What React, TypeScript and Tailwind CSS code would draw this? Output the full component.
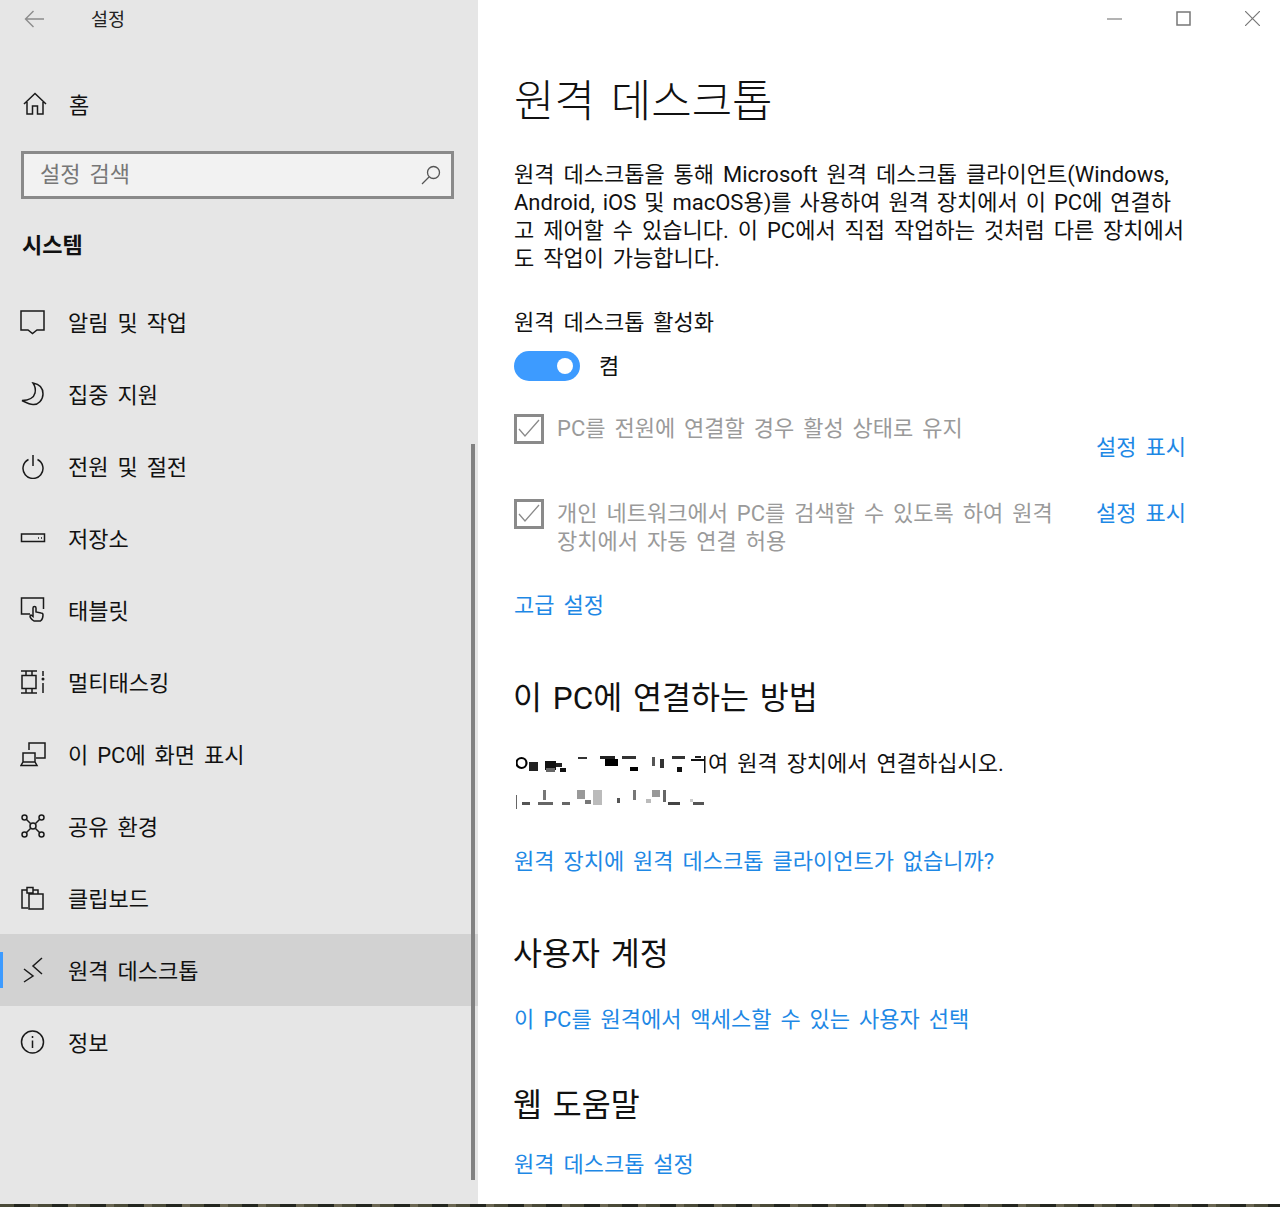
import type { ReactNode } from 'react'

const FONT = "font-['Roboto','Noto_Sans_CJK_KR',sans-serif]"

function Svg({ children, className = '' }: { children: ReactNode; className?: string }) {
  return (
    <svg width="26" height="26" viewBox="0 0 26 26" fill="none" stroke="#1a1a1a" strokeWidth="1.5" className={className}>
      {children}
    </svg>
  )
}

const icons: Record<string, ReactNode> = {
  home: <Svg><path d="M2 13 13 2.500 24 13M5 11v12h5.500v-8h5v8H21V11" /></Svg>,
  bell: <Svg><path d="M1 2h23v19h-7l-4.500 3.500L8 21H1z" /></Svg>,
  moon: <Svg><path d="M13 2c6 1 10 5 10 11 0 6-5 11-10 10.500-4 0-7-2-11-4 7 0 12-3 13-7.500C16 8 15 5 13 2z" /></Svg>,
  power: <Svg><path d="M13 2v11M8.500 6.500a10 10 0 1 0 9 0" /></Svg>,
  storage: <Svg><path d="M1.500 9h23v7.500h-23zM18 13h1M21 13h1" /></Svg>,
  tablet: <Svg><path d="M10 17H1.500V1h22v11M14 24c-3-2-4-4-4-5l1-1 2 1.500V11a1.500 1.500 0 0 1 3 0v4l5 1c1 0 2 1 2 2 0 3-1 5-2.500 6H15z" /></Svg>,
  multi: <Svg><path d="M1 2h16M1 24h16M2 6.500h14v13H2zM6 6.500v-4M12 6.500v-4M6 19.500v4M12 19.500v4M23 2v5M23 14v10" /><circle cx="23" cy="10" r="1.500" fill="#1a1a1a" stroke="none" /></Svg>,
  project: <Svg><path d="M9 9V2h16v15H16M3 12h12v9H3zM1 24.500h16l-2-3.500H3z" /></Svg>,
  share: (
    <Svg>
      <circle cx="4.500" cy="4.500" r="2.500" /><circle cx="21.500" cy="4.500" r="2.500" /><circle cx="4.500" cy="21.500" r="2.500" /><circle cx="21.500" cy="21.500" r="2.500" /><circle cx="13" cy="13" r="3" />
      <path d="m6.500 6.500 4 4M19.500 6.500l-4 4M6.500 19.500l4-4M19.500 19.500l-4-4" />
    </Svg>
  ),
  clip: <Svg><path d="M8 23H2V5h5V2.500h6V5h5v4M7 5v3h6V5M9 9h14v15H9z" /></Svg>,
  remote: <Svg><path d="m4 12 9 7-9 6M22 1l-9 8 9 8" /></Svg>,
  info: <Svg><circle cx="12.500" cy="13" r="11" /><path d="M12.500 11.500V19M12.500 7v2" /></Svg>,
}

const items = [
  ['bell', '알림 및 작업'],
  ['moon', '집중 지원'],
  ['power', '전원 및 절전'],
  ['storage', '저장소'],
  ['tablet', '태블릿'],
  ['multi', '멀티태스킹'],
  ['project', '이 PC에 화면 표시'],
  ['share', '공유 환경'],
  ['clip', '클립보드'],
  ['remote', '원격 데스크톱'],
  ['info', '정보'],
]

function NavRow({ icon, label, active }: { icon: string; label: string; active?: boolean }) {
  return (
    <div className={`relative flex h-[72px] items-center pl-5 ${active ? 'bg-[#d2d2d2]' : ''}`}>
      {active && <div className="absolute left-0 top-[18px] h-9 w-[3px] bg-[#3d9bff]" />}
      <div className="w-[48px] shrink-0">{icons[icon]}</div>
      <span className="pt-[3px] text-[22px] leading-7 text-[#111] [word-spacing:3.500px]">{label}</span>
    </div>
  )
}

function Sidebar() {
  return (
    <aside className="relative h-[1204px] w-[478px] shrink-0 bg-[#e6e6e6]">
      <div className="flex h-[38px] items-center pl-6">
        <svg width="20" height="18" viewBox="0 0 20 18" fill="none" stroke="#8c8c8c" strokeWidth="1.400">
          <path d="M20 9H1.500M9.500 1 1.500 9l8 8" />
        </svg>
        <span className="ml-[47px] pt-[3px] text-[18.500px] text-[#222]">설정</span>
      </div>
      <div className="mt-[48px] flex h-9 items-center pl-[22px]">
        {icons.home}
        <span className="ml-[21px] pt-[2px] text-[22px] text-[#111]">홈</span>
      </div>
      <div className="ml-[21px] mt-[29px] flex h-12 w-[433px] items-center justify-between border-[3px] border-[#8a8a8a] bg-[#f2f2f2] pl-4 pr-[10px]">
        <span className="-mt-[2px] text-[22px] text-[#777] [word-spacing:3.500px]">설정 검색</span>
        <svg width="20" height="20" viewBox="0 0 20 20" fill="none" stroke="#555" strokeWidth="1.300">
          <circle cx="12.500" cy="7.500" r="6" />
          <path d="M8 12 1 19" />
        </svg>
      </div>
      <div className="ml-[22px] mt-[31px] text-[22px] font-bold leading-8 text-[#111]">시스템</div>
      <nav className="mt-[24px]">
        {items.map(([icon, label]) => (
          <NavRow key={label} icon={icon} label={label} active={label === '원격 데스크톱'} />
        ))}
      </nav>
      <div className="absolute left-[471px] top-[444px] h-[736px] w-1 bg-[#828282]" />
    </aside>
  )
}

function Check({ children, link }: { children: ReactNode; link: ReactNode }) {
  return (
    <div className="flex w-[672px]">
      <div className="relative h-[30px] w-[30px] shrink-0 border-[3px] border-[#8a8a8a]">
        <svg width="24" height="24" viewBox="0 0 24 24" fill="none" stroke="#8a8a8a" strokeWidth="1.300" className="absolute left-0 top-0">
          <path d="m2 12 6 7L22 3" />
        </svg>
      </div>
      <div className="ml-[13px] flex-1 text-[22px] leading-7 text-[#9a9a9a] [word-spacing:3.500px]">{children}</div>
      {link}
    </div>
  )
}

function Link({ children, className = '' }: { children: ReactNode; className?: string }) {
  return <div className={`text-[22px] leading-7 text-[#1e88e5] [word-spacing:3.500px] ${className}`}>{children}</div>
}

function Heading({ children, className = '' }: { children: ReactNode; className?: string }) {
  return <h2 className={`-ml-[1px] text-[31.500px] leading-10 text-[#111] font-normal [word-spacing:3px] ${className}`}>{children}</h2>
}

// pixelated name that is blurred out in the picture
function Redacted() {
  const top = [[13, 9, 9, 9, '#222'], [29, 8, 11, 9, '#111'], [30, 15, 9, 4, '#666'], [40, 10, 6, 4, '#222'], [44, 15, 6, 4, '#111'], [62, 4, 9, 2, '#333'], [84, 3, 15, 3, '#222'], [89, 6, 13, 7, '#000'], [106, 3, 14, 3, '#333'], [114, 14, 8, 4, '#000'], [136, 4, 3, 9, '#555'], [144, 6, 4, 9, '#333'], [156, 3, 13, 3, '#333'], [161, 14, 5, 5, '#111'], [179, 3, 6, 2, '#222'], [175, 6, 14, 2, '#111'], [188, 3, 1.500, 17, '#111']]
  return (
    <svg width="192" height="20" viewBox="0 0 192 20" fill="none" className="ml-[2px]">
      <circle cx="5.500" cy="10" r="5" stroke="#000" strokeWidth="2.200" />
      {top.map(([x, y, w, h, c], i) => <rect key={i} x={x} y={y} width={w} height={h} fill={c as string} />)}
    </svg>
  )
}

function RedactedLine() {
  const bits = [[0, 8, 1, 14, '#666'], [6, 15, 8, 3, '#555'], [27, 3, 3, 10, '#777'], [22, 15, 15, 3, '#666'], [46, 15, 8, 3, '#666'], [61, 3, 8, 9, '#999'], [69, 13, 6, 4, '#777'], [77, 3, 9, 15, '#bbb'], [101, 11, 3, 5, '#555'], [117, 3, 3, 10, '#777'], [136, 3, 8, 7, '#999'], [130, 12, 5, 4, '#bbb'], [147, 3, 3, 12, '#666'], [152, 15, 12, 3, '#444'], [174, 12, 3, 3, '#ccc'], [177, 15, 11, 3, '#555']]
  return (
    <svg width="192" height="25" viewBox="0 0 192 25" className="ml-[2px]">
      {bits.map(([x, y, w, h, c], i) => <rect key={i} x={x} y={y} width={w} height={h} fill={c as string} />)}
    </svg>
  )
}

export default function App() {
  return (
    <div className={`${FONT} relative h-[1207px] w-[1280px] overflow-hidden bg-white`}>
      <div className="flex">
        <Sidebar />
        <main className="relative flex-1 pl-9">
          <div className="absolute right-[20px] top-[11px] flex items-start gap-[54px]">
            <svg width="15" height="16" fill="none" stroke="#808080" strokeWidth="1.200"><path d="M0 8h15" /></svg>
            <svg width="15" height="15" fill="none" stroke="#777" strokeWidth="1.500"><path d="M1 1h13v13H1z" /></svg>
            <svg width="15" height="15" fill="none" stroke="#777" strokeWidth="1.200"><path d="m0 0 15 15M15 0 0 15" /></svg>
          </div>
          <h1 className="mt-[73px] text-[44px] font-light leading-[58px] text-[#111] [word-spacing:5px]">원격 데스크톱</h1>
          <div className="mt-[30px] text-[22px] leading-7 text-[#111] [word-spacing:3.500px]">
            <div>원격 데스크톱을 통해 Microsoft 원격 데스크톱 클라이언트(Windows,</div>
            <div className="[word-spacing:2.500px]">Android, iOS 및 macOS용)를 사용하여 원격 장치에서 이 PC에 연결하</div>
            <div>고 제어할 수 있습니다. 이 PC에서 직접 작업하는 것처럼 다른 장치에서</div>
            <div>도 작업이 가능합니다.</div>
          </div>
          <div className="mt-[36px] text-[22px] leading-7 text-[#111] [word-spacing:3.500px]">원격 데스크톱 활성화</div>
          <div className="mt-[11px] flex items-center">
            <div className="flex h-[30px] w-[66px] items-center justify-end rounded-full bg-[#3d9bff] pr-[7px]">
              <div className="h-4 w-4 rounded-full bg-white" />
            </div>
            <span className="ml-[19px] pt-[2px] text-[22px] text-[#111]">켬</span>
          </div>
          <div className="mt-[31px]">
            <Check link={<Link className="mt-[20px]">설정 표시</Link>}>
              <div className="mt-[1px]">PC를 전원에 연결할 경우 활성 상태로 유지</div>
            </Check>
          </div>
          <div className="mt-[37px]">
            <Check link={<Link className="mt-[1px]">설정 표시</Link>}>
              <div className="mt-[1px]">개인 네트워크에서 PC를 검색할 수 있도록 하여 원격</div>
              <div>장치에서 자동 연결 허용</div>
            </Check>
          </div>
          <Link className="mt-[36px]">고급 설정</Link>
          <Heading className="mt-[59px]">이 PC에 연결하는 방법</Heading>
          <div className="mt-[30px] flex h-7 items-center text-[22px] text-[#111] [word-spacing:3.500px]">
            <Redacted />
            <span>여 원격 장치에서 연결하십시오.</span>
          </div>
          <div className="mt-[10px] h-7"><RedactedLine /></div>
          <Link className="mt-[33px]">원격 장치에 원격 데스크톱 클라이언트가 없습니까?</Link>
          <Heading className="mt-[59px]">사용자 계정</Heading>
          <Link className="mt-[31px]">이 PC를 원격에서 액세스할 수 있는 사용자 선택</Link>
          <Heading className="mt-[52px]">웹 도움말</Heading>
          <Link className="mt-[25px]">원격 데스크톱 설정</Link>
        </main>
      </div>
      <div className="h-[3px] bg-[repeating-linear-gradient(90deg,#4a4a38_0_14px,#23261f_14px_30px,#6a6652_30px_38px)]" />
    </div>
  )
}
